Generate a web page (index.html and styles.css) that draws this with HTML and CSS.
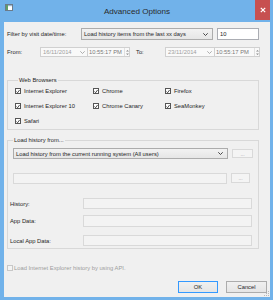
FILE: index.html
```html
<!DOCTYPE html>
<html>
<head>
<meta charset="utf-8">
<title>Advanced Options</title>
<link rel="stylesheet" href="styles.css">
</head>
<body>
<div class="window">
  <div class="titlebar">
    <span class="app-icon">
      <svg width="8" height="7" viewBox="0 0 8 7"><rect x="0.5" y="0.5" width="7" height="6" fill="#fff" stroke="#6b7b8a"/><rect x="1" y="1" width="2" height="5" fill="#5f9f6a"/><rect x="3" y="1" width="4" height="1.2" fill="#9cb6cf"/></svg>
    </span>
    <span class="title">Advanced Options</span>
    <span class="close">
      <svg width="6" height="6" viewBox="0 0 6 6"><path d="M0.8 0.8 L5.2 5.2 M5.2 0.8 L0.8 5.2" stroke="#fff" stroke-width="1.2"/></svg>
    </span>
  </div>
  <div class="client">
    <div class="row row-filter">
      <span class="lbl lbl-filter">Filter by visit date/time:</span>
      <div class="combo combo-filter">
        <span>Load history items from the last xx days</span>
        <svg class="chev" width="5" height="3" viewBox="0 0 5 3"><path d="M0.3 0.3 L2.5 2.5 L4.7 0.3" fill="none" stroke="#333" stroke-width="0.9"/></svg>
      </div>
      <div class="textbox tb-days">10</div>
    </div>
    <div class="row row-dates">
      <span class="lbl lbl-from">From:</span>
      <div class="dtp dtp-from">
        <span class="dtp-date">16/11/2014<svg class="chev" width="5" height="3" viewBox="0 0 5 3"><path d="M0.3 0.3 L2.5 2.5 L4.7 0.3" fill="none" stroke="#9a9a9a" stroke-width="0.8"/></svg></span>
        <span class="dtp-time"><span class="tt">10:55:17 PM</span><span class="spin"><svg width="3" height="7" viewBox="0 0 3 7"><path d="M0 2.5 L1.5 1 L3 2.5 Z M0 4.5 L1.5 6 L3 4.5 Z" fill="#8a8a8a"/></svg></span></span>
      </div>
      <span class="lbl lbl-to">To:</span>
      <div class="dtp dtp-to">
        <span class="dtp-date">23/11/2014<svg class="chev" width="5" height="3" viewBox="0 0 5 3"><path d="M0.3 0.3 L2.5 2.5 L4.7 0.3" fill="none" stroke="#9a9a9a" stroke-width="0.8"/></svg></span>
        <span class="dtp-time"><span class="tt">10:55:17 PM</span><span class="spin"><svg width="3" height="7" viewBox="0 0 3 7"><path d="M0 2.5 L1.5 1 L3 2.5 Z M0 4.5 L1.5 6 L3 4.5 Z" fill="#8a8a8a"/></svg></span></span>
      </div>
    </div>

    <fieldset class="group group-browsers">
      <legend>Web Browsers</legend>
      <div class="cb-grid">
        <label class="cb"><span class="box"><svg width="5" height="5" viewBox="0 0 5 5"><path d="M0.6 2.5 L2 4 L4.5 0.6" fill="none" stroke="#222" stroke-width="1"/></svg></span>Internet Explorer</label>
        <label class="cb"><span class="box"><svg width="5" height="5" viewBox="0 0 5 5"><path d="M0.6 2.5 L2 4 L4.5 0.6" fill="none" stroke="#222" stroke-width="1"/></svg></span>Chrome</label>
        <label class="cb"><span class="box"><svg width="5" height="5" viewBox="0 0 5 5"><path d="M0.6 2.5 L2 4 L4.5 0.6" fill="none" stroke="#222" stroke-width="1"/></svg></span>Firefox</label>
        <label class="cb"><span class="box"><svg width="5" height="5" viewBox="0 0 5 5"><path d="M0.6 2.5 L2 4 L4.5 0.6" fill="none" stroke="#222" stroke-width="1"/></svg></span>Internet Explorer 10</label>
        <label class="cb"><span class="box"><svg width="5" height="5" viewBox="0 0 5 5"><path d="M0.6 2.5 L2 4 L4.5 0.6" fill="none" stroke="#222" stroke-width="1"/></svg></span>Chrome Canary</label>
        <label class="cb"><span class="box"><svg width="5" height="5" viewBox="0 0 5 5"><path d="M0.6 2.5 L2 4 L4.5 0.6" fill="none" stroke="#222" stroke-width="1"/></svg></span>SeaMonkey</label>
        <label class="cb"><span class="box"><svg width="5" height="5" viewBox="0 0 5 5"><path d="M0.6 2.5 L2 4 L4.5 0.6" fill="none" stroke="#222" stroke-width="1"/></svg></span>Safari</label>
      </div>
    </fieldset>

    <fieldset class="group group-load">
      <legend>Load history from...</legend>
      <div class="load-row load-row-1">
        <div class="combo combo-source">
          <span>Load history from the current running system (All users)</span>
          <svg class="chev" width="5" height="3" viewBox="0 0 5 3"><path d="M0.3 0.3 L2.5 2.5 L4.7 0.3" fill="none" stroke="#333" stroke-width="0.9"/></svg>
        </div>
        <span class="btn-dots btn-dots-1">...</span>
      </div>
      <div class="load-row load-row-2">
        <div class="textbox tb-disabled tb-path"></div>
        <span class="btn-dots btn-dots-2">...</span>
      </div>
      <div class="field-row field-history">
        <span class="lbl lbl-field">History:</span>
        <div class="textbox tb-disabled tb-field"></div>
      </div>
      <div class="field-row field-appdata">
        <span class="lbl lbl-field">App Data:</span>
        <div class="textbox tb-disabled tb-field"></div>
      </div>
      <div class="field-row field-local">
        <span class="lbl lbl-field">Local App Data:</span>
        <div class="textbox tb-disabled tb-field"></div>
      </div>
    </fieldset>

    <label class="api-row"><span class="box box-disabled"></span>Load Internet Explorer history by using API.</label>

    <div class="buttons">
      <span class="btn btn-ok">OK</span>
      <span class="btn btn-cancel">Cancel</span>
    </div>
    <span class="grip">
      <svg width="6" height="6" viewBox="0 0 6 6"><g fill="#b8b8b8"><rect x="4" y="0" width="1" height="1"/><rect x="2" y="2" width="1" height="1"/><rect x="4" y="2" width="1" height="1"/><rect x="0" y="4" width="1" height="1"/><rect x="2" y="4" width="1" height="1"/><rect x="4" y="4" width="1" height="1"/></g></svg>
    </span>
  </div>
</div>
</body>
</html>
```
FILE: styles.css
```css
* { box-sizing: border-box; }
html, body { margin: 0; padding: 0; }
body {
  width: 273px;
  height: 300px;
  overflow: hidden;
  font-family: "Liberation Sans", Arial, sans-serif;
  font-size: 5.8px;
  color: #1e1e1e;
  background: #71b2ea;
}
.window {
  width: 273px;
  height: 300px;
  background: #71b2ea;
  display: flex;
  flex-direction: column;
  padding: 0 3px 3px 4px;
}
.titlebar {
  height: 22px;
  flex: none;
  display: grid;
  grid-template-columns: 1fr auto 1fr;
  align-items: start;
}
.app-icon { margin: 4px 0 0 1px; line-height: 0; }
.title {
  font-size: 8.1px;
  color: #2a2a2a;
  margin-top: 7px;
  line-height: 9px;
  font-family: "Liberation Sans", Arial, sans-serif;
}
.close {
  justify-self: end;
  width: 15px;
  height: 20px;
  background: #c75050;
  display: flex;
  align-items: center;
  justify-content: center;
}
.client {
  flex: 1;
  background: #f0f0f0;
  padding: 6px 3px 0 3px;
  display: flex;
  flex-direction: column;
  position: relative;
}
.row { display: flex; align-items: center; }
.lbl { white-space: nowrap; }
.row-filter { height: 12px; }
.lbl-filter { width: 74px; }
.combo {
  border: 1px solid #acacac;
  background: linear-gradient(#f2f2f2, #e6e6e6);
  display: flex;
  align-items: center;
  justify-content: space-between;
  padding: 0 4px 0 2px;
  white-space: nowrap;
  overflow: hidden;
}
.combo-filter { width: 132px; height: 12px; }
.chev { flex: none; }
.textbox {
  border: 1px solid #abadb3;
  background: #fff;
  display: flex;
  align-items: center;
  padding-left: 2px;
}
.tb-days { width: 42px; height: 12px; margin-left: 4px; }
.row-dates { margin-top: 7px; height: 10px; color: #1e1e1e; }
.lbl-from { width: 33px; }
.lbl-to { width: 29px; margin-left: 6px; }
.dtp { display: flex; height: 10px; }
.dtp-date {
  border: 1px solid #d0d0d0;
  background: #f9f9f9;
  color: #a0a0a0;
  display: flex;
  align-items: center;
  justify-content: space-between;
  padding: 0 2px 0 2px;
}
.dtp-time {
  border: 1px solid #d0d0d0;
  border-left: none;
  background: #f9f9f9;
  color: #7a7a7a;
  display: flex;
  align-items: center;
  justify-content: space-between;
  padding-left: 1px;
  overflow: hidden;
}
.tt { white-space: nowrap; overflow: hidden; flex: 1; }
.spin { flex: none; width: 5px; height: 8px; display: flex; align-items: center; justify-content: center; border-left: 1px solid #e0e0e0; }
.dtp-from .dtp-date { width: 48px; }
.dtp-from .dtp-time { width: 42px; }
.dtp-to .dtp-date { width: 50px; }
.dtp-to .dtp-time { width: 45px; }

.group {
  margin: 0;
  padding: 0;
  border: 1px solid #d8d8d8;
  min-width: 0;
  width: 252px;
}
.group legend {
  padding: 0 1px;
  margin-left: 3px;
  line-height: 8px;
  color: #1e1e1e;
}
.group-browsers { margin-top: 19px; padding: 3px 0 4px 7px; }
.cb-grid {
  display: grid;
  grid-template-columns: 78px 72px 1fr;
  row-gap: 7px;
}
.cb {
  display: flex;
  align-items: center;
  height: 8px;
  white-space: nowrap;
}
.box {
  width: 6px;
  height: 6px;
  border: 1px solid #555;
  background: #fff;
  margin-right: 3px;
  display: flex;
  align-items: center;
  justify-content: center;
  flex: none;
}
.box svg { display: block; }
.group-load { margin-top: 6px; padding: 4px 0 2px 2px; }
.load-row { display: flex; align-items: flex-start; margin-left: 3px; }
.combo-source { width: 215px; height: 11px; color: #1e1e1e; }
.btn-dots {
  border: 1px solid #d9d9d9;
  background: #f4f4f4;
  color: #9a9a9a;
  display: flex;
  align-items: center;
  justify-content: center;
  font-size: 5px;
}
.btn-dots-1 { width: 21px; height: 9px; margin: 1px 0 0 4px; }
.load-row-2 { margin-top: 14px; }
.tb-disabled { border-color: #d9d9d9; background: #f3f3f3; }
.tb-path { width: 214px; height: 11px; }
.btn-dots-2 { width: 19px; height: 10px; margin-left: 4px; }
.field-row { display: flex; align-items: center; height: 11px; }
.field-history { margin-top: 14px; }
.field-appdata { margin-top: 6px; height: 12px; }
.field-local { margin-top: 8px; }
.lbl-field { width: 73px; }
.tb-field { width: 169px; height: 100%; }

.api-row {
  margin-top: 15px;
  display: flex;
  align-items: center;
  height: 8px;
  color: #9d9d9d;
  white-space: nowrap;
}
.box-disabled { border-color: #c8c8c8; background: #f4f4f4; margin-right: 1px; }
.buttons {
  margin-top: 9px;
  display: flex;
  justify-content: flex-end;
  gap: 8px;
}
.btn {
  height: 12px;
  background: linear-gradient(#f0f0f0, #e5e5e5);
  border: 1px solid #acacac;
  display: flex;
  align-items: center;
  justify-content: center;
}
.btn-ok { width: 40px; border-color: #3399ff; }
.btn-cancel { width: 41px; }
.grip {
  position: absolute;
  right: 0;
  bottom: 0;
  line-height: 0;
}
```
